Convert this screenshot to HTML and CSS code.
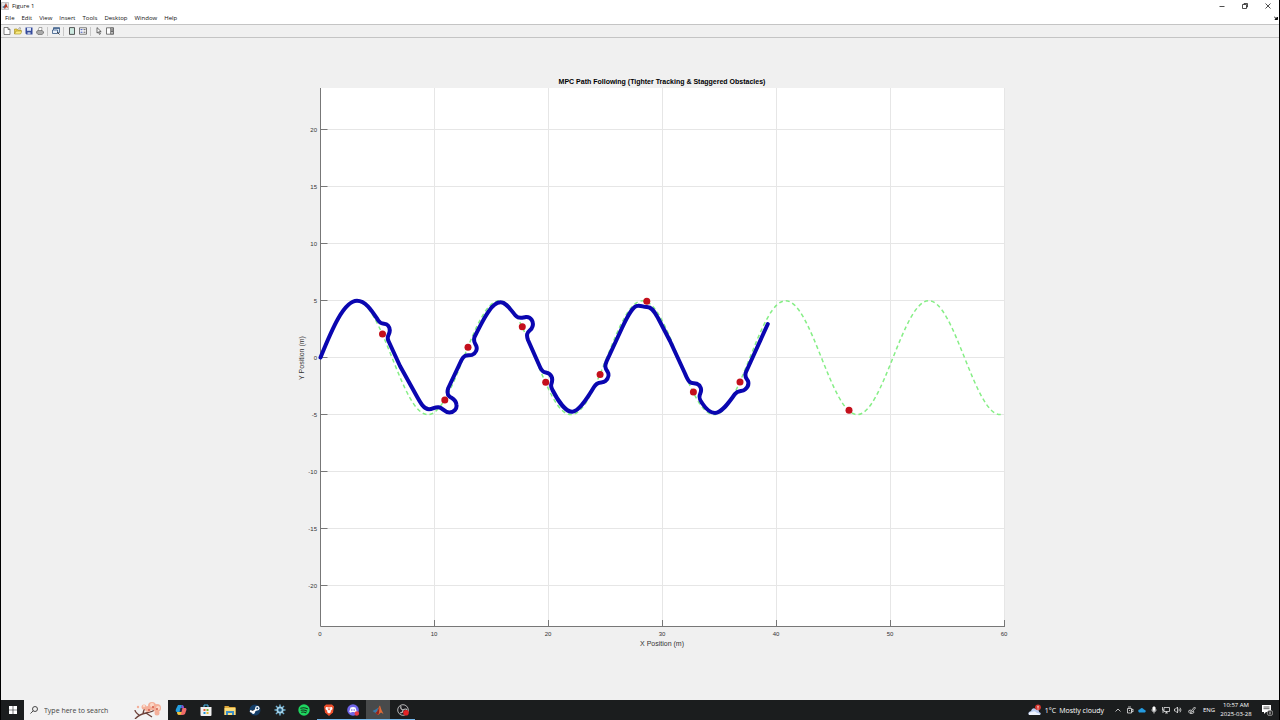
FILE: index.html
```html
<!DOCTYPE html>
<html lang="en">

<head>
  <meta charset="UTF-8">
  <meta name="viewport" content="width=device-width, initial-scale=1.0">
  <title>Figure 1</title>
  <link rel="stylesheet" href="styles.css">
</head>

<body>
  <header class="titlebar">
    <svg class="logo" viewBox="0 0 8 8"><path fill="#e4e4e4" stroke="#999" stroke-width=".5" d="M.5.5h7v7h-7z"/><path fill="#356fa0" d="M1 5l2-1 2-3-1 4-1 1z"/><path fill="#b5361c" d="M5 1l2 5-2-1-1 2-1-1z"/></svg>
    <span class="name">Figure 1</span>
    <button class="win" aria-label="Minimize"><svg viewBox="0 0 8 8"><path d="M1.500 4.500h5"/></svg></button>
    <button class="win" aria-label="Restore"><svg viewBox="0 0 8 8"><path d="M1.500 2.500h4v4h-4zM3 2.500v-1h3.500V5h-1"/></svg></button>
    <button class="win" aria-label="Close"><svg viewBox="0 0 8 8"><path d="M1.500 1.500l5 5M6.500 1.500l-5 5"/></svg></button>
  </header>

  <nav class="menu">
    <button>File</button>
    <button>Edit</button>
    <button>View</button>
    <button>Insert</button>
    <button>Tools</button>
    <button>Desktop</button>
    <button>Window</button>
    <button>Help</button>
    <svg class="dock" viewBox="0 0 4 4"><path d="M0 .5l3 3M3.500 1v2.500H1z" stroke="#111" fill="#111"/></svg>
  </nav>

  <div class="toolbar">
    <button aria-label="New figure"><svg viewBox="0 0 8 8"><path fill="#fff" stroke="#666" stroke-width=".8" d="M1 .5h4l2 2v5H1zM5 .5v2h2"/></svg></button>
    <button aria-label="Open"><svg viewBox="0 0 8 8"><path fill="#e9ce48" stroke="#a08a20" stroke-width=".6" d="M.5 7V2H3l1 1h3v1"/><path fill="#fbed83" stroke="#a08a20" stroke-width=".6" d="M.5 7l1.500-3h6L6.500 7z"/><path fill="none" stroke="#555" stroke-width=".6" d="M4.500 1.500Q6 0 7 1.500"/></svg></button>
    <button aria-label="Save"><svg viewBox="0 0 8 8"><path fill="#354a9c" d="M.5.5h7v7h-6l-1-1z"/><path fill="#dce6f7" d="M2 .8h4v3H2z"/><path fill="#b9c4de" d="M2.500 5.200h3v2.300h-3z"/></svg></button>
    <button aria-label="Print"><svg viewBox="0 0 8 8"><path fill="#fff" stroke="#777" stroke-width=".6" d="M2 4l1-3.500h3L5.500 4"/><path fill="#aaa" stroke="#555" stroke-width=".6" d="M.6 4.500L2 3.500h4l1.500 1.200v1.500L6 7.500H2L.6 6z"/></svg></button>
    <i class="sep"></i>
    <button aria-label="Print preview"><svg viewBox="0 0 8 8"><path fill="#dce8f5" stroke="#355783" stroke-width=".8" d="M1.500 .6h6v5h-6zM1.500 1.500h6"/><path fill="#e8f0fa" stroke="#355783" stroke-width=".8" d="M.5 3h5v3.500h-5z"/><path stroke="#444" d="M5 5l2.500 2.500"/></svg></button>
    <i class="sep"></i>
    <button aria-label="Insert colorbar"><svg viewBox="0 0 8 8"><path fill="#cbe8df" stroke="#444" stroke-width=".9" d="M1.500 .6h5v6.800h-5z"/></svg></button>
    <button aria-label="Insert legend"><svg viewBox="0 0 8 8"><path fill="#fff" stroke="#555" stroke-width=".8" d="M.5.8h7v6.400h-7z"/><path stroke="#304ab0" d="M1.500 2.700h2M1.500 5.200h2"/><path stroke="#555" d="M4.500 2.700h2M4.500 5.200h2"/></svg></button>
    <i class="sep"></i>
    <button aria-label="Edit plot"><svg viewBox="0 0 8 8"><path fill="#fff" stroke="#333" stroke-width=".7" d="M2 .6v5.500l1.400-1.200 1 2.500 1-.5-1-2.300h1.800z"/></svg></button>
    <button aria-label="Property inspector"><svg viewBox="0 0 8 8"><path fill="#fff" stroke="#555" stroke-width=".8" d="M.5.8h7v6.400h-7z"/><path fill="#bbb" stroke="#555" stroke-width=".6" d="M4.500 1h3v6h-3z"/><path stroke="#333" stroke-width=".6" d="M5 3h2M5 4.500h2"/></svg></button>
  </div>

  <main class="figure">
    <svg class="plot" viewBox="1 38 1278 662">
      <rect x="320.500" y="88" width="684" height="539" fill="#fff"/>
      <path class="grid" d="M434.500 88v539M548.500 88v539M662.500 88v539M776.500 88v539M890.500 88v539M1004.500 88v539M320 129.500h684M320 186.500h684M320 243.500h684M320 300.500h684M320 357.500h684M320 414.500h684M320 471.500h684M320 528.500h684M320 585.500h684"/>
      <path class="axis" d="M320.500 88v538.500h684M320.500 129.500h7M320.500 186.500h7M320.500 243.500h7M320.500 300.500h7M320.500 357.500h7M320.500 414.500h7M320.500 471.500h7M320.500 528.500h7M320.500 585.500h7M434.500 627v-7M548.500 627v-7M662.500 627v-7M776.500 627v-7M890.500 627v-7M1004.500 627v-7"/>

      <!-- reference sine -->
      <path class="ref" d="M320.500 357.700
        c11.670-29.150 22.830-56.900 35.780-56.900s24.110 27.750 35.780 56.900c11.670 29.150 22.830 56.900 35.780 56.900s24.110-27.750 35.780-56.900
        c11.670-29.150 22.830-56.900 35.780-56.900s24.110 27.750 35.780 56.900c11.670 29.150 22.830 56.900 35.780 56.900s24.110-27.750 35.780-56.900
        c11.670-29.150 22.830-56.900 35.780-56.900s24.110 27.750 35.780 56.900c11.670 29.150 22.830 56.900 35.780 56.900s24.110-27.750 35.780-56.900
        c11.670-29.150 22.830-56.900 35.780-56.900s24.110 27.750 35.780 56.900c11.670 29.150 22.830 56.900 35.780 56.900s24.110-27.750 35.780-56.900
        c11.670-29.150 22.830-56.900 35.780-56.900s24.110 27.750 35.780 56.900c11.670 29.150 22.830 56.900 35.780 56.900h3"/>

      <!-- driven path -->
      <path class="track" d="M320.500 357.500
        C332 329 344 300.800 357 300.800 C366 300.800 372 311 378.300 320.500
        C382 326 385 322 388 325.500 C391 329 390 332 388.500 335 Q387 338 388.500 341
        L400 366 L415 393 C421 404 424 409.300 429 409.300 C433 409.300 435 406.500 439 407.300
        C443 408 445 412.700 449.500 412.500 C454 412.300 457 409 456.500 405 C456 399 452 398.500 449.500 396.500 C447 394.500 447.300 391 448.300 388
        L461.500 360 C464.500 353.500 468 356 472 354.800 C476 353.500 477.500 349 476.300 346 C475 343 473 342 474.500 337
        C480 326 485 316 489 311 C493 305 496 302.300 500.700 302.300 C506 302.300 510 309 515.500 315.500
        C519 319.500 522 317.500 526 317 C531 316.500 534 322 532.500 326.500 C531.500 330.500 528 330.500 527.200 334 Q526.700 336.500 528 340
        L540 367 C543 374.500 546 371 549.500 374 C552.500 376.500 552.700 380 551.500 383.500 C550.500 386 551 387.500 552.500 390
        C558 401 566 412 572.300 411.700 C579 411.500 588 397 594 387 C598 380 602 384 605.500 381 C609 378 609 374 607.500 371.500 C605 368 604.700 366 606.500 361.500
        L622 328 C628 315 633 305.800 638 305.700 C642 305.500 643 307 646.500 307 C652 306.500 655 313 658 318 L670 341 L685 373.500
        C690 386 692 382.500 696.700 383.700 C701 385.500 702 389.500 700.300 393.500 C698.800 397 699 399 702 403
        C706 409 710 413 715 413 C722 413 729 402 735 394 C738 390 742 392 745 389.500 C748 387 749 384 748 381 C746.500 378 744 377 746 372
        L753.500 355.500 L767.800 324"/>

      <g fill="#c4101c">
        <circle cx="382.500" cy="334" r="3.500"/>
        <circle cx="444.800" cy="400" r="3.500"/>
        <circle cx="468" cy="347.200" r="3.500"/>
        <circle cx="522.300" cy="326.800" r="3.500"/>
        <circle cx="545.700" cy="382.300" r="3.500"/>
        <circle cx="600.100" cy="374.500" r="3.500"/>
        <circle cx="646.800" cy="301.300" r="3.500"/>
        <circle cx="693.400" cy="391.900" r="3.500"/>
        <circle cx="740" cy="382" r="3.500"/>
        <circle cx="849" cy="410.300" r="3.500"/>
      </g>

      <text class="title" x="662" y="84">MPC Path Following (Tighter Tracking &amp; Staggered Obstacles)</text>
      <g class="tick ytick">
        <text x="317" y="132">20</text>
        <text x="317" y="189">15</text>
        <text x="317" y="246">10</text>
        <text x="317" y="303">5</text>
        <text x="317" y="360">0</text>
        <text x="317" y="417">-5</text>
        <text x="317" y="474">-10</text>
        <text x="317" y="531">-15</text>
        <text x="317" y="588">-20</text>
      </g>
      <g class="tick">
        <text x="320" y="636">0</text>
        <text x="434" y="636">10</text>
        <text x="548" y="636">20</text>
        <text x="662" y="636">30</text>
        <text x="776" y="636">40</text>
        <text x="890" y="636">50</text>
        <text x="1004" y="636">60</text>
      </g>
      <text class="label" x="662" y="646">X Position (m)</text>
      <text class="label" x="304" y="358" transform="rotate(-90 304 358)">Y Position (m)</text>
    </svg>
  </main>

  <footer class="taskbar">
    <button class="start" aria-label="Start"><svg viewBox="0 0 8 8"><path fill="#fff" d="M0 0h3.700v3.700H0zM4.300 0H8v3.700H4.300zM0 4.300h3.700V8H0zM4.300 4.300H8V8H4.300z"/></svg></button>
    <label class="search">
      <svg class="lens" viewBox="0 0 8 8"><circle cx="5" cy="3" r="2.500" fill="none" stroke="#222" stroke-width=".8"/><path stroke="#222" stroke-width=".8" d="M3.200 4.800L.5 7.500"/></svg>
      <input type="text" placeholder="Type here to search" aria-label="Search">
      <svg class="blossom" viewBox="0 0 32 18">
        <path fill="none" stroke="#6b4038" stroke-width="1.300" d="M3 18Q8 13 14 12T25 8M7 14Q3 11 3 9M14 12l6 4M11 12l2-6"/>
        <g fill="#f4b09a"><circle cx="12" cy="6" r="2.500"/><circle cx="16" cy="8" r="3"/><circle cx="20" cy="5" r="4"/><circle cx="25" cy="7" r="4"/><circle cx="25" cy="12" r="2.500"/><circle cx="6" cy="6" r="1.200"/></g>
        <g fill="#fbd8c8"><circle cx="20" cy="4" r="2"/><circle cx="26" cy="7" r="2"/><circle cx="12" cy="5" r="1.300"/></g>
        <g fill="#cf5442"><circle cx="21" cy="6" r=".9"/><circle cx="25" cy="8" r=".9"/><circle cx="17" cy="9" r=".9"/></g>
      </svg>
    </label>
    <div class="apps">
      <button aria-label="Copilot"><svg viewBox="0 0 12 12"><path fill="#249fe0" d="M3 1h4L5 8H2Q0 8 1 5z"/><path fill="#8653d8" d="M7 1q2 0 2 3h1q2 0 1 3L9 7 6 4z"/><path fill="#f06b69" d="M7 4h3q2 0 1 3l-1 3q-1 1-3 1H5z"/><path fill="#ecc441" d="M2 8h3l2-1-1 3q0 1-2 1T2 8z"/><path fill="#242a42" d="M5.500 4h2l-1 4h-2z"/></svg></button>
      <button aria-label="Store"><svg viewBox="0 0 12 12"><path fill="none" stroke="#49b9ea" d="M4 3V1h4v2"/><path fill="#f1f1f1" d="M.5 3h11v8q0 1-1 1h-9q-1 0-1-1z"/><path fill="#e85a35" d="M3.500 5h2v2h-2z"/><path fill="#75b62c" d="M6.500 5h2v2h-2z"/><path fill="#2094d4" d="M3.500 8h2v2h-2z"/><path fill="#e8b92b" d="M6.500 8h2v2h-2z"/></svg></button>
      <button aria-label="File Explorer"><svg viewBox="0 0 12 12"><path fill="#dca63a" d="M.5 2h4l1 1h6v8H.5z"/><path fill="#fbdc78" d="M.5 4h11v7H.5z"/><path fill="#3d8ec6" d="M2 7h8v4H8V9H4v2H2z"/></svg></button>
      <button aria-label="Steam"><svg viewBox="0 0 12 12"><circle cx="6" cy="6" r="5.500" fill="#143e68"/><path stroke="#fff" stroke-width="2" d="M1 7l3 1 4-3"/><circle cx="8.300" cy="4.300" r="2.200" fill="#fff"/><circle cx="8.300" cy="4.300" r="1" fill="#143e68"/><circle cx="4.300" cy="8.300" r="1.600" fill="#fff"/></svg></button>
      <button aria-label="Settings"><svg viewBox="0 0 12 12"><path stroke="#6eaed0" stroke-width="1.500" d="M6 .5v11M.5 6h11M2 2l8 8M10 2l-8 8"/><circle cx="6" cy="6" r="3.500" fill="#a7d2e6"/><circle cx="6" cy="6" r="1.800" fill="#184d70"/></svg></button>
      <button aria-label="Spotify"><svg viewBox="0 0 12 12"><circle cx="6" cy="6" r="5.700" fill="#1ed760"/><path fill="none" stroke="#12351d" stroke-width="1.100" stroke-linecap="round" d="M2.700 4.200q3.500-1 6.700.6M3.200 6.300q3-.8 5.500.6M3.600 8.200q2.300-.6 4.300.5"/></svg></button>
      <button class="open" aria-label="Brave"><svg viewBox="0 0 12 12"><path fill="#f0502c" d="M3 .5h6l2 2-1 6L6 12 2 8.500l-1-6z"/><path fill="#fff" d="M3 3l3 .5L9 3l.5 2-2 2 .5 1-2 1.500L4 8l.5-1-2-2z"/><path fill="#f0502c" d="M4.500 4.500l1.500 2 1.500-2z"/></svg></button>
      <button class="open" aria-label="Discord"><svg viewBox="0 0 12 12"><circle cx="6" cy="6" r="5.800" fill="#7064e8"/><path fill="#fff" d="M3.500 3.500q2.500-1 5 0l1.300 4.500-1.800.8-.7-.9H4.700l-.7.9L2.200 8z"/><circle cx="4.800" cy="6" r=".8" fill="#7064e8"/><circle cx="7.200" cy="6" r=".8" fill="#7064e8"/><circle cx="9.800" cy="9.500" r="2.300" fill="#e83946"/></svg></button>
      <button class="open active" aria-label="MATLAB"><svg viewBox="0 0 12 12"><path fill="#3879a8" d="M.5 7l3-1.500 3-2L5 8 3.500 9z"/><path fill="#e26b36" d="M3.500 9l2-2Q7 2 8 1.500L9.500 6l2 4-2.500-1.500L6 11z"/><path fill="#8d2520" d="M3.500 9l2-2 2-4-.5 6-1 2z"/></svg></button>
      <button class="open" aria-label="OBS Studio"><svg viewBox="0 0 12 12"><circle cx="6" cy="6" r="5.300" fill="#1b1b1f" stroke="#ddd" stroke-width=".8"/><path fill="none" stroke="#bbb" stroke-width="1.200" d="M6 6Q3 5 4 2M6 6q3-2 4 0M6 6q0 3-3 3"/><circle cx="9" cy="8.800" r="2.800" fill="#e42325"/></svg></button>
    </div>

    <div class="tray">
      <button class="weather">
        <svg viewBox="0 0 14 12"><path fill="#b9cdf2" d="M1 11q-2-3 2-4 1-4 5-2 3 0 3 3 3 1 1 3z"/><path fill="#eef3fd" d="M1 11q-1-3 3-3 3-2 5 1 3 0 3 2z"/><circle cx="10" cy="3.300" r="2.900" fill="#d6362f"/><path stroke="#fff" d="M10 1.800v2M10 4.500v1"/></svg>
        <span>1°C</span><span>Mostly cloudy</span>
      </button>
      <button class="ico" aria-label="Show hidden icons"><svg viewBox="0 0 8 8"><path d="M1.500 5.500L4 3l2.500 2.500"/></svg></button>
      <button class="ico" aria-label="Meet now"><svg viewBox="0 0 8 8"><path d="M1.500 2.500h4v4.500h-4zM2 1h3M5.500 4l1.500-1v3l-1.500-1M3 4.500h1"/></svg></button>
      <button class="ico cloud" aria-label="OneDrive"><svg viewBox="0 0 8 8"><path d="M1 6.500q-2-2.500 1-3.200Q4 .5 6 3.500q3 1 1 3z"/></svg></button>
      <button class="ico" aria-label="Microphone"><svg viewBox="0 0 8 8"><rect x="2.800" y=".8" width="2.400" height="4" rx="1" fill="#fff"/><path d="M1.800 3.500q0 2.300 2.200 2.300t2.200-2.300M4 6v1.500"/></svg></button>
      <button class="ico" aria-label="Network"><svg viewBox="0 0 8 8"><path d="M2 1.500h5.500V5.500H2zM.5 1v3h1.500M1 4v3M3 7h3M4.500 5.500V7"/></svg></button>
      <button class="ico" aria-label="Volume"><svg viewBox="0 0 8 8"><path d="M.5 3h1L3.500 1v6l-2-2h-1zM4.800 2.700q1 1.300 0 2.600M6 1.700q2 2.300 0 4.600"/></svg></button>
      <button class="ico pen" aria-label="Windows Ink"><svg viewBox="0 0 8 8"><path d="M3 5l3.500-4 1 1L4 6l-1.500.5zM3 4Q0 4 .7 6T4 7.500Q7 7 5.500 5"/></svg></button>
      <button class="lang">ENG</button>
      <button class="clock"><span>10:57 AM</span><span>2025-03-28</span></button>
      <button class="note" aria-label="Notifications"><svg viewBox="0 0 12 12"><path fill="#fff" d="M1 1h9v7H5L3 10V8H1z"/><path stroke="#222" stroke-width=".7" d="M2.500 3h6M2.500 4.700h6"/><circle cx="9" cy="9" r="2.800" fill="#222" stroke="#ccc" stroke-width=".6"/><path stroke="#fff" stroke-width=".8" d="M9 7.500v3"/></svg></button>
    </div>
  </footer>
</body>

</html>
```
FILE: styles.css
```css
* {
  box-sizing: border-box;
}

body {
  margin: 0;
  min-height: 100vh;
  display: flex;
  flex-direction: column;
  border: solid #000;
  border-width: 0 1px;
  background: #f0f0f0;
  font-family: "Open Sans", "Noto Sans", sans-serif;
  font-size: 6px;
  color: #111;
}

button {
  display: flex;
  align-items: center;
  justify-content: center;
  margin: 0;
  padding: 0;
  border: none;
  background: none;
  font: inherit;
  color: inherit;
}

svg {
  display: block;
}

.titlebar {
  display: flex;
  align-items: center;
  height: 12px;
  background: #fff;
}

.logo {
  width: 8px;
  height: 8px;
}

.name {
  flex: 1;
  padding-left: 3px;
}

.win {
  width: 23px;
  height: 10px;
}

.win svg {
  width: 8px;
  height: 8px;
  fill: none;
  stroke: #222;
  stroke-width: .8;
}

.menu {
  display: flex;
  align-items: center;
  gap: 7px;
  height: 12px;
  padding: 0 1px 0 4px;
  background: #fff;
}

.dock {
  width: 4px;
  height: 4px;
  margin-left: auto;
}

.toolbar {
  display: flex;
  align-items: center;
  height: 14px;
  border-top: 1px solid #c4c4c4;
  border-bottom: 1px solid #c4c4c4;
}

.toolbar button {
  width: 11px;
  height: 11px;
}

.toolbar svg {
  width: 8px;
  height: 8px;
}

.sep {
  width: 1px;
  height: 9px;
  margin: 0 2px;
  background: #c8c8c8;
}

.figure {
  flex: 1;
  display: flex;
  min-height: 0;
}

.plot {
  width: 100%;
  font-family: "Liberation Sans", Arial, sans-serif;
  text-anchor: middle;
}

.grid {
  fill: none;
  stroke: #e6e6e6;
}

.axis {
  fill: none;
  stroke: #777;
}

.ref {
  fill: none;
  stroke: #86ee86;
  stroke-width: 1.5;
  stroke-dasharray: 4 3;
}

.track {
  fill: none;
  stroke: #0a06b0;
  stroke-width: 4;
  stroke-linejoin: round;
  stroke-linecap: round;
}

.title {
  font-size: 7px;
  font-weight: bold;
}

.tick {
  font-size: 6px;
  fill: #333;
}

.ytick {
  text-anchor: end;
}

.label {
  font-size: 7px;
  fill: #333;
}

.taskbar {
  display: flex;
  height: 20px;
  background: #1b1d1e;
  color: #fff;
}

.start {
  width: 23px;
}

.start svg {
  width: 8px;
  height: 8px;
}

.search {
  display: flex;
  align-items: center;
  width: 144px;
  padding: 0 4px 0 6px;
  background: #f2f2f2;
}

.lens {
  width: 8px;
  height: 8px;
}

.search input {
  flex: 1;
  min-width: 0;
  padding: 0 0 0 6px;
  border: none;
  outline: none;
  background: none;
  font: inherit;
  font-size: 7px;
}

.search input::placeholder {
  color: #444;
}

.blossom {
  width: 32px;
  height: 18px;
}

.apps {
  display: grid;
  grid-template-columns: repeat(10, 1fr);
  width: 246px;
  margin-left: 1px;
}

.apps svg {
  width: 12px;
  height: 12px;
}

.open {
  border-bottom: 1px solid #76b9ed;
}

.active {
  background: #484a4b;
}

.tray {
  display: flex;
  margin-left: auto;
}

.weather {
  gap: 3px;
  margin-right: 8px;
  font-size: 7px;
}

.weather svg {
  width: 14px;
  height: 12px;
}

.ico {
  width: 12px;
}

.ico svg {
  width: 8px;
  height: 8px;
  fill: none;
  stroke: #fff;
  stroke-width: .7;
}

.cloud svg {
  fill: #249be0;
  stroke: none;
}

.pen {
  width: 16px;
}

.lang {
  width: 18px;
}

.clock {
  flex-direction: column;
  width: 36px;
  line-height: 9px;
}

.note {
  width: 25px;
}

.note svg {
  width: 12px;
  height: 12px;
}
```
